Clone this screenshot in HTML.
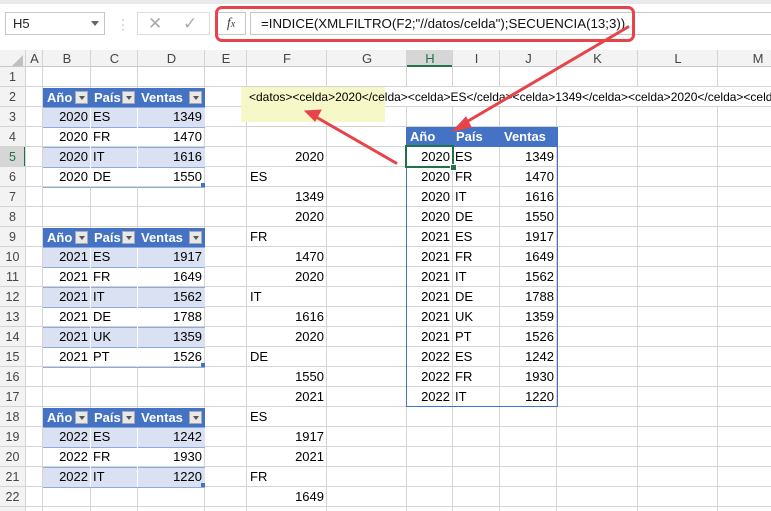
<!DOCTYPE html>
<html><head><meta charset="utf-8"><style>
body{margin:0;width:771px;height:511px;overflow:hidden;background:#fff;position:relative;font-family:"Liberation Sans",sans-serif;}
.a{position:absolute}
.t{position:absolute;height:20px;line-height:20px;font-size:13px;color:#000;white-space:nowrap}
.r{text-align:right}
.hd{position:absolute;height:17px;line-height:17px;font-size:13px;color:#444;text-align:center;top:50px}
.rh{position:absolute;left:0;width:25px;height:20px;line-height:20px;font-size:12.5px;color:#444;text-align:center}
.th{position:absolute;height:19px;line-height:20px;background:#4472C4;color:#fff;font-weight:bold;font-size:13px}
.fb{position:absolute;width:13px;height:13px;background:#e8e8e8;border:1px solid #aaa;box-sizing:border-box}
.fb:after{content:"";position:absolute;left:3px;top:4px;border-left:3px solid transparent;border-right:3px solid transparent;border-top:4px solid #555}
.band{position:absolute;height:20px;background:#D9E1F2;border-top:1px solid #8EA9DB;box-sizing:border-box}
.line{position:absolute;height:1px;background:#8EA9DB}
</style></head><body>
<div class="a" style="left:0;top:0;width:771px;height:50px;background:#fff;border-bottom:1px solid #d4d4d4"></div>
<div class="a" style="left:0;top:0;width:771px;height:4px;background:#e9e9e9"></div>
<div class="a" style="left:5px;top:12px;width:100px;height:23px;border:1px solid #c6c6c6;box-sizing:border-box;font-size:13px;line-height:21px;padding-left:7px;color:#222">H5</div>
<div class="a" style="left:91px;top:21px;border-left:4px solid transparent;border-right:4px solid transparent;border-top:5px solid #666"></div>
<div class="a" style="left:121px;top:17px;color:#aaa;font-size:12px;line-height:5px">·<br>·<br>·</div>
<div class="a" style="left:137px;top:12px;width:73px;height:23px;border:1px solid #ddd;box-sizing:border-box"></div>
<div class="a" style="left:148px;top:12px;font-size:17px;color:#aaa;line-height:23px">✕</div>
<div class="a" style="left:183px;top:12px;font-size:17px;color:#aaa;line-height:23px">✓</div>
<div class="a" style="left:216px;top:12px;width:30px;height:23px;border:1px solid #c6c6c6;box-sizing:border-box;font-family:'Liberation Serif',serif;font-style:italic;font-size:14px;line-height:21px;text-align:center;color:#444">f<span style="font-size:10px">x</span></div>
<div class="a" style="left:250px;top:12px;width:521px;height:23px;border:1px solid #c6c6c6;border-right:none;box-sizing:border-box"></div>
<div class="a" style="left:261px;top:13px;font-size:13.3px;line-height:21px;color:#111;white-space:nowrap">=INDICE(XMLFILTRO(F2;"//datos/celda");SECUENCIA(13;3))</div>
<div class="a" style="left:215px;top:6px;width:420px;height:36px;border:3px solid #e8434a;border-radius:7px;box-sizing:border-box"></div>

<div class="a" style="left:0;top:50px;width:771px;height:17px;background:#f3f3f3;border-bottom:1px solid #c8c8c8;box-sizing:border-box"></div>
<div class="a" style="left:12px;top:55px;border-left:11px solid transparent;border-bottom:11px solid #c0c0c0"></div>
<div class="a" style="left:407px;top:50px;width:46px;height:17px;background:#d6d6d6;border-bottom:2px solid #217346;box-sizing:border-box"></div>
<div class="hd" style="left:26px;width:17px">A</div>
<div class="hd" style="left:43px;width:48px">B</div>
<div class="hd" style="left:91px;width:47px">C</div>
<div class="hd" style="left:138px;width:67px">D</div>
<div class="hd" style="left:205px;width:42px">E</div>
<div class="hd" style="left:247px;width:80px">F</div>
<div class="hd" style="left:327px;width:80px">G</div>
<div class="hd" style="left:407px;width:46px;color:#217346">H</div>
<div class="hd" style="left:453px;width:47px">I</div>
<div class="hd" style="left:500px;width:57px">J</div>
<div class="hd" style="left:557px;width:81px">K</div>
<div class="hd" style="left:638px;width:80px">L</div>
<div class="hd" style="left:718px;width:80px">M</div>

<div class="a" style="left:0;top:67px;width:26px;height:444px;background:#f3f3f3;border-right:1px solid #c8c8c8;box-sizing:border-box"></div>
<div class="a" style="left:0;top:147px;width:26px;height:20px;background:#d6d6d6;border-right:2px solid #217346;box-sizing:border-box"></div>

<svg class="a" style="left:0;top:50px" width="771" height="461">
<g stroke="#d4d4d4" stroke-width="1">
<line x1="25.5" y1="0" x2="25.5" y2="461"/><line x1="42.5" y1="0" x2="42.5" y2="461"/><line x1="90.5" y1="0" x2="90.5" y2="461"/><line x1="137.5" y1="0" x2="137.5" y2="461"/><line x1="204.5" y1="0" x2="204.5" y2="461"/><line x1="246.5" y1="0" x2="246.5" y2="461"/><line x1="326.5" y1="0" x2="326.5" y2="461"/><line x1="406.5" y1="0" x2="406.5" y2="461"/><line x1="452.5" y1="0" x2="452.5" y2="461"/><line x1="499.5" y1="0" x2="499.5" y2="461"/><line x1="556.5" y1="0" x2="556.5" y2="461"/><line x1="637.5" y1="0" x2="637.5" y2="461"/><line x1="717.5" y1="0" x2="717.5" y2="461"/>
<line x1="0" y1="36.5" x2="771" y2="36.5"/><line x1="0" y1="56.5" x2="771" y2="56.5"/><line x1="0" y1="76.5" x2="771" y2="76.5"/><line x1="0" y1="96.5" x2="771" y2="96.5"/><line x1="0" y1="116.5" x2="771" y2="116.5"/><line x1="0" y1="136.5" x2="771" y2="136.5"/><line x1="0" y1="156.5" x2="771" y2="156.5"/><line x1="0" y1="176.5" x2="771" y2="176.5"/><line x1="0" y1="196.5" x2="771" y2="196.5"/><line x1="0" y1="216.5" x2="771" y2="216.5"/><line x1="0" y1="236.5" x2="771" y2="236.5"/><line x1="0" y1="256.5" x2="771" y2="256.5"/><line x1="0" y1="276.5" x2="771" y2="276.5"/><line x1="0" y1="296.5" x2="771" y2="296.5"/><line x1="0" y1="316.5" x2="771" y2="316.5"/><line x1="0" y1="336.5" x2="771" y2="336.5"/><line x1="0" y1="356.5" x2="771" y2="356.5"/><line x1="0" y1="376.5" x2="771" y2="376.5"/><line x1="0" y1="396.5" x2="771" y2="396.5"/><line x1="0" y1="416.5" x2="771" y2="416.5"/><line x1="0" y1="436.5" x2="771" y2="436.5"/><line x1="0" y1="456.5" x2="771" y2="456.5"/>
</g></svg>

<div class="rh" style="top:67px">1</div><div class="rh" style="top:87px">2</div><div class="rh" style="top:107px">3</div><div class="rh" style="top:127px">4</div><div class="rh" style="top:147px;color:#217346">5</div><div class="rh" style="top:167px">6</div><div class="rh" style="top:187px">7</div><div class="rh" style="top:207px">8</div><div class="rh" style="top:227px">9</div><div class="rh" style="top:247px">10</div><div class="rh" style="top:267px">11</div><div class="rh" style="top:287px">12</div><div class="rh" style="top:307px">13</div><div class="rh" style="top:327px">14</div><div class="rh" style="top:347px">15</div><div class="rh" style="top:367px">16</div><div class="rh" style="top:387px">17</div><div class="rh" style="top:407px">18</div><div class="rh" style="top:427px">19</div><div class="rh" style="top:447px">20</div><div class="rh" style="top:467px">21</div><div class="rh" style="top:487px">22</div>

<div class="a" style="left:247px;top:87px;width:524px;height:20px;background:#fff;border-bottom:1px solid #d4d4d4;box-sizing:border-box"></div>
<div class="a" style="left:241px;top:87px;width:144px;height:35px;background:#f6f8c4;opacity:.95"></div>
<div class="t" style="left:249px;top:87px;font-size:12px">&lt;datos&gt;&lt;celda&gt;2020&lt;/celda&gt;&lt;celda&gt;ES&lt;/celda&gt;&lt;celda&gt;1349&lt;/celda&gt;&lt;celda&gt;2020&lt;/celda&gt;&lt;celda&gt;</div>

<div class="th" style="left:43px;top:88px;width:162px"></div>
<div class="band" style="left:43px;top:107px;width:162px"></div><div class="line" style="left:43px;top:127px;width:162px"></div><div class="band" style="left:43px;top:147px;width:162px"></div><div class="line" style="left:43px;top:167px;width:162px"></div><div class="line" style="left:43px;top:187px;width:162px"></div>
<div class="th" style="left:43px;top:228px;width:162px"></div>
<div class="band" style="left:43px;top:247px;width:162px"></div><div class="line" style="left:43px;top:267px;width:162px"></div><div class="band" style="left:43px;top:287px;width:162px"></div><div class="line" style="left:43px;top:307px;width:162px"></div><div class="band" style="left:43px;top:327px;width:162px"></div><div class="line" style="left:43px;top:347px;width:162px"></div><div class="line" style="left:43px;top:367px;width:162px"></div>
<div class="th" style="left:43px;top:408px;width:162px"></div>
<div class="band" style="left:43px;top:427px;width:162px"></div><div class="line" style="left:43px;top:447px;width:162px"></div><div class="band" style="left:43px;top:467px;width:162px"></div><div class="line" style="left:43px;top:487px;width:162px"></div>
<svg class="a" style="left:0;top:0" width="771" height="511"><g stroke="#fff" stroke-width="1"><line x1="90.5" y1="108" x2="90.5" y2="187"/><line x1="137.5" y1="108" x2="137.5" y2="187"/><line x1="90.5" y1="248" x2="90.5" y2="367"/><line x1="137.5" y1="248" x2="137.5" y2="367"/><line x1="90.5" y1="428" x2="90.5" y2="487"/><line x1="137.5" y1="428" x2="137.5" y2="487"/></g></svg>

<div class="th" style="left:47px;top:88px;background:none">Año</div><div class="th" style="left:94px;top:88px;background:none">País</div><div class="th" style="left:141px;top:88px;background:none">Ventas</div>
<div class="fb" style="left:75px;top:91px"></div><div class="fb" style="left:122px;top:91px"></div><div class="fb" style="left:189px;top:91px"></div>
<div class="th" style="left:47px;top:228px;background:none">Año</div><div class="th" style="left:94px;top:228px;background:none">País</div><div class="th" style="left:141px;top:228px;background:none">Ventas</div>
<div class="fb" style="left:75px;top:231px"></div><div class="fb" style="left:122px;top:231px"></div><div class="fb" style="left:189px;top:231px"></div>
<div class="th" style="left:47px;top:408px;background:none">Año</div><div class="th" style="left:94px;top:408px;background:none">País</div><div class="th" style="left:141px;top:408px;background:none">Ventas</div>
<div class="fb" style="left:75px;top:411px"></div><div class="fb" style="left:122px;top:411px"></div><div class="fb" style="left:189px;top:411px"></div>

<div class="t r" style="left:43px;width:45px;top:107px">2020</div><div class="t" style="left:93px;top:107px">ES</div><div class="t r" style="left:138px;width:64px;top:107px">1349</div>
<div class="t r" style="left:43px;width:45px;top:127px">2020</div><div class="t" style="left:93px;top:127px">FR</div><div class="t r" style="left:138px;width:64px;top:127px">1470</div>
<div class="t r" style="left:43px;width:45px;top:147px">2020</div><div class="t" style="left:93px;top:147px">IT</div><div class="t r" style="left:138px;width:64px;top:147px">1616</div>
<div class="t r" style="left:43px;width:45px;top:167px">2020</div><div class="t" style="left:93px;top:167px">DE</div><div class="t r" style="left:138px;width:64px;top:167px">1550</div>
<div class="t r" style="left:43px;width:45px;top:247px">2021</div><div class="t" style="left:93px;top:247px">ES</div><div class="t r" style="left:138px;width:64px;top:247px">1917</div>
<div class="t r" style="left:43px;width:45px;top:267px">2021</div><div class="t" style="left:93px;top:267px">FR</div><div class="t r" style="left:138px;width:64px;top:267px">1649</div>
<div class="t r" style="left:43px;width:45px;top:287px">2021</div><div class="t" style="left:93px;top:287px">IT</div><div class="t r" style="left:138px;width:64px;top:287px">1562</div>
<div class="t r" style="left:43px;width:45px;top:307px">2021</div><div class="t" style="left:93px;top:307px">DE</div><div class="t r" style="left:138px;width:64px;top:307px">1788</div>
<div class="t r" style="left:43px;width:45px;top:327px">2021</div><div class="t" style="left:93px;top:327px">UK</div><div class="t r" style="left:138px;width:64px;top:327px">1359</div>
<div class="t r" style="left:43px;width:45px;top:347px">2021</div><div class="t" style="left:93px;top:347px">PT</div><div class="t r" style="left:138px;width:64px;top:347px">1526</div>
<div class="t r" style="left:43px;width:45px;top:427px">2022</div><div class="t" style="left:93px;top:427px">ES</div><div class="t r" style="left:138px;width:64px;top:427px">1242</div>
<div class="t r" style="left:43px;width:45px;top:447px">2022</div><div class="t" style="left:93px;top:447px">FR</div><div class="t r" style="left:138px;width:64px;top:447px">1930</div>
<div class="t r" style="left:43px;width:45px;top:467px">2022</div><div class="t" style="left:93px;top:467px">IT</div><div class="t r" style="left:138px;width:64px;top:467px">1220</div>
<div class="a" style="left:201px;top:183px;width:4px;height:4px;background:#4472C4"></div>
<div class="a" style="left:201px;top:363px;width:4px;height:4px;background:#4472C4"></div>
<div class="a" style="left:201px;top:483px;width:4px;height:4px;background:#4472C4"></div>

<div class="t r" style="left:247px;width:77px;top:147px">2020</div>
<div class="t" style="left:250px;top:167px">ES</div>
<div class="t r" style="left:247px;width:77px;top:187px">1349</div>
<div class="t r" style="left:247px;width:77px;top:207px">2020</div>
<div class="t" style="left:250px;top:227px">FR</div>
<div class="t r" style="left:247px;width:77px;top:247px">1470</div>
<div class="t r" style="left:247px;width:77px;top:267px">2020</div>
<div class="t" style="left:250px;top:287px">IT</div>
<div class="t r" style="left:247px;width:77px;top:307px">1616</div>
<div class="t r" style="left:247px;width:77px;top:327px">2020</div>
<div class="t" style="left:250px;top:347px">DE</div>
<div class="t r" style="left:247px;width:77px;top:367px">1550</div>
<div class="t r" style="left:247px;width:77px;top:387px">2021</div>
<div class="t" style="left:250px;top:407px">ES</div>
<div class="t r" style="left:247px;width:77px;top:427px">1917</div>
<div class="t r" style="left:247px;width:77px;top:447px">2021</div>
<div class="t" style="left:250px;top:467px">FR</div>
<div class="t r" style="left:247px;width:77px;top:487px">1649</div>

<div class="a" style="left:407px;top:127px;width:151px;height:20px;background:#4472C4"></div>
<div class="a" style="left:406px;top:127px;width:152px;height:280px;border:1px solid #4472C4;box-sizing:border-box"></div>
<div class="th" style="left:410px;top:127px;background:none">Año</div><div class="th" style="left:456px;top:127px;background:none">País</div><div class="th" style="left:504px;top:127px;background:none">Ventas</div>
<div class="t r" style="left:407px;width:43px;top:147px">2020</div><div class="t" style="left:455px;top:147px">ES</div><div class="t r" style="left:500px;width:54px;top:147px">1349</div>
<div class="t r" style="left:407px;width:43px;top:167px">2020</div><div class="t" style="left:455px;top:167px">FR</div><div class="t r" style="left:500px;width:54px;top:167px">1470</div>
<div class="t r" style="left:407px;width:43px;top:187px">2020</div><div class="t" style="left:455px;top:187px">IT</div><div class="t r" style="left:500px;width:54px;top:187px">1616</div>
<div class="t r" style="left:407px;width:43px;top:207px">2020</div><div class="t" style="left:455px;top:207px">DE</div><div class="t r" style="left:500px;width:54px;top:207px">1550</div>
<div class="t r" style="left:407px;width:43px;top:227px">2021</div><div class="t" style="left:455px;top:227px">ES</div><div class="t r" style="left:500px;width:54px;top:227px">1917</div>
<div class="t r" style="left:407px;width:43px;top:247px">2021</div><div class="t" style="left:455px;top:247px">FR</div><div class="t r" style="left:500px;width:54px;top:247px">1649</div>
<div class="t r" style="left:407px;width:43px;top:267px">2021</div><div class="t" style="left:455px;top:267px">IT</div><div class="t r" style="left:500px;width:54px;top:267px">1562</div>
<div class="t r" style="left:407px;width:43px;top:287px">2021</div><div class="t" style="left:455px;top:287px">DE</div><div class="t r" style="left:500px;width:54px;top:287px">1788</div>
<div class="t r" style="left:407px;width:43px;top:307px">2021</div><div class="t" style="left:455px;top:307px">UK</div><div class="t r" style="left:500px;width:54px;top:307px">1359</div>
<div class="t r" style="left:407px;width:43px;top:327px">2021</div><div class="t" style="left:455px;top:327px">PT</div><div class="t r" style="left:500px;width:54px;top:327px">1526</div>
<div class="t r" style="left:407px;width:43px;top:347px">2022</div><div class="t" style="left:455px;top:347px">ES</div><div class="t r" style="left:500px;width:54px;top:347px">1242</div>
<div class="t r" style="left:407px;width:43px;top:367px">2022</div><div class="t" style="left:455px;top:367px">FR</div><div class="t r" style="left:500px;width:54px;top:367px">1930</div>
<div class="t r" style="left:407px;width:43px;top:387px">2022</div><div class="t" style="left:455px;top:387px">IT</div><div class="t r" style="left:500px;width:54px;top:387px">1220</div>
<div class="a" style="left:405px;top:145px;width:49px;height:23px;border:2px solid #217346;box-sizing:border-box"></div>
<div class="a" style="left:450px;top:164px;width:5px;height:5px;background:#217346;border:1px solid #fff"></div>

<svg class="a" style="left:0;top:0" width="771" height="511">
<g stroke="#e8434a" stroke-width="3" fill="#e8434a" stroke-linecap="round">
<line x1="628" y1="27" x2="463" y2="124"/>
<polygon points="453,131 466,117 471,127" stroke-width="1"/>
<line x1="396" y1="163" x2="316" y2="117"/>
<polygon points="305,111 321,110 315,121" stroke-width="1"/>
</g></svg>
</body></html>
